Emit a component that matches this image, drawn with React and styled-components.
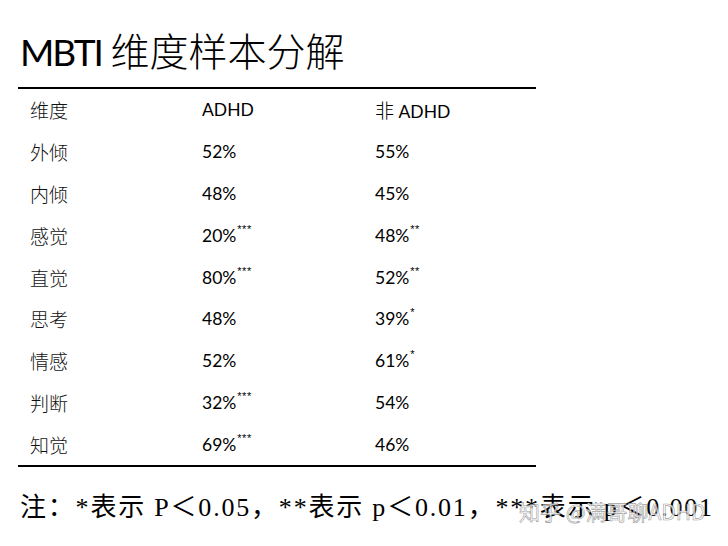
import React from "react";
import styled, { createGlobalStyle } from "styled-components";

const GlobalStyle = createGlobalStyle`
  html, body {
    margin: 0;
    padding: 0;
    background: #fff;
  }
  body {
    width: 728px;
    height: 546px;
    overflow: hidden;
  }
`;

const rows = [
  ["外倾", "52%", "", "55%", ""],
  ["内倾", "48%", "", "45%", ""],
  ["感觉", "20%", "***", "48%", "**"],
  ["直觉", "80%", "***", "52%", "**"],
  ["思考", "48%", "", "39%", "*"],
  ["情感", "52%", "", "61%", "*"],
  ["判断", "32%", "***", "54%", ""],
  ["知觉", "69%", "***", "46%", ""],
];

export default function App() {
  return (
    <>
      <GlobalStyle />
      <Page>
        <Title>
          <Latin>MBTI</Latin> 维度样本分解
        </Title>

        <Table>
          <Row>
            <Label>维度</Label>
            <Value>ADHD</Value>
            <Value>
              <Han>非</Han> ADHD
            </Value>
          </Row>
          {rows.map((r) => (
            <Row key={r[0]}>
              <Label>{r[0]}</Label>
              <Value>
                {r[1]}
                {r[2] && <Sig>{r[2]}</Sig>}
              </Value>
              <Value>
                {r[3]}
                {r[4] && <Sig>{r[4]}</Sig>}
              </Value>
            </Row>
          ))}
        </Table>

        <Note>注：*表示 P＜0.05，**表示 p＜0.01，***表示 p＜0.001</Note>
        <Watermark>知乎 @满哥聊ADHD</Watermark>
      </Page>
    </>
  );
}

const Page = styled.div`
  position: relative;
  width: 728px;
  height: 546px;
  padding: 27px 0 0 18px;
  box-sizing: border-box;
  color: #000;
`;

const Title = styled.h1`
  margin: 0 0 0 2px;
  height: 60px;
  font-family: "Noto Sans CJK SC", sans-serif;
  font-weight: 300;
  font-size: 39px;
  line-height: 44px;
  white-space: nowrap;
`;

const Latin = styled.span`
  font-family: Lato, sans-serif;
  font-weight: 400;
  font-size: 37px;
  letter-spacing: -2px;
`;

const Table = styled.div`
  width: 518px;
  border-top: 2px solid #000;
  border-bottom: 2px solid #000;
  display: flex;
  flex-direction: column;
`;

const Row = styled.div`
  display: grid;
  grid-template-columns: 172px 173px 1fr;
  align-items: center;
  height: 41.8px;
  padding-left: 12px;
`;

const Label = styled.div`
  font-family: "Noto Sans CJK SC", sans-serif;
  font-weight: 300;
  font-size: 19px;
  color: #111;
`;

const Value = styled.div`
  font-family: Lato, sans-serif;
  font-size: 17.5px;
  color: #000;
  white-space: nowrap;
`;

const Han = styled.span`
  font-family: "Noto Sans CJK SC", sans-serif;
  font-weight: 300;
  font-size: 19px;
`;

const Sig = styled.sup`
  font-family: "Liberation Sans", sans-serif;
  font-size: 11px;
  vertical-align: 9px;
  line-height: 0;
  margin-left: 1px;
  letter-spacing: 0.5px;
`;

const Note = styled.div`
  margin: 25px 0 0 2px;
  font-family: "Liberation Serif", "Noto Sans CJK SC", serif;
  font-size: 26px;
  letter-spacing: 1.8px;
  line-height: 32px;
  white-space: nowrap;
  color: #000;
`;

const Watermark = styled.div`
  position: absolute;
  left: 519px;
  top: 497px;
  font-family: "Noto Sans CJK SC", Lato, sans-serif;
  font-size: 21px;
  line-height: 28px;
  color: rgba(255, 255, 255, 0.8);
  -webkit-text-stroke: 0.6px rgba(120, 120, 120, 0.75);
  white-space: nowrap;
`;
